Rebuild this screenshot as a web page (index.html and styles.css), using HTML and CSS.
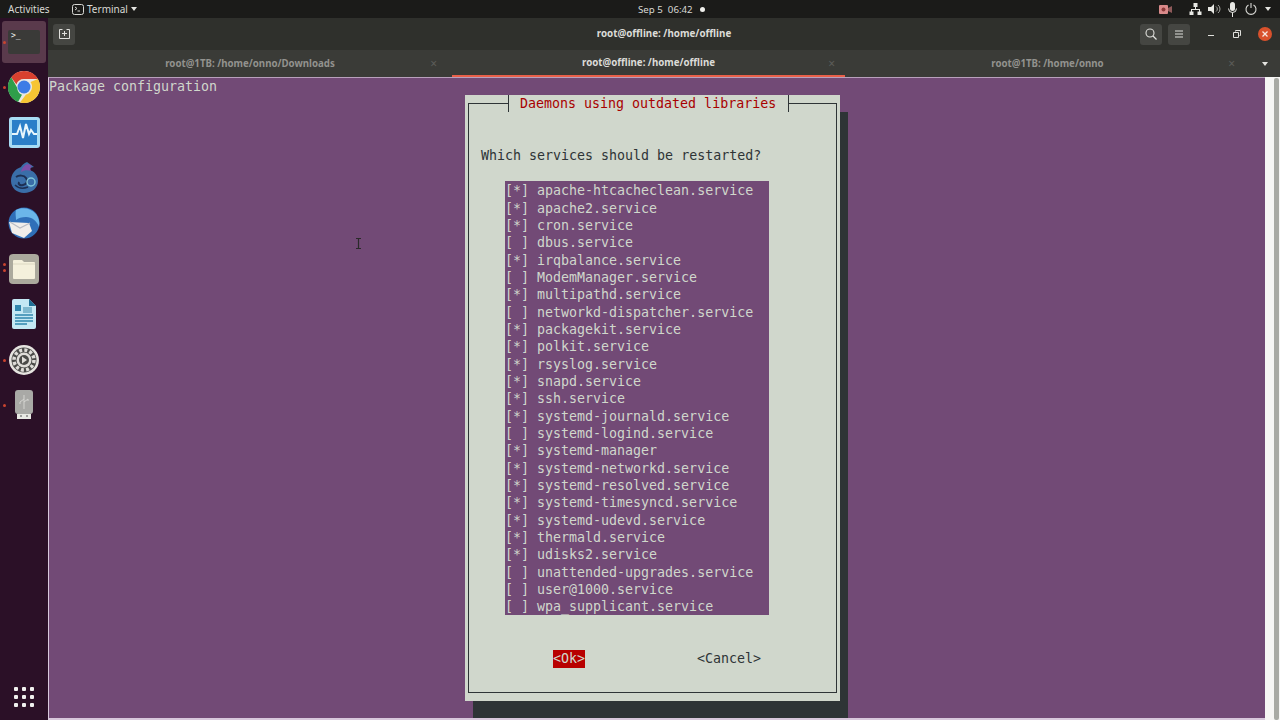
FILE: index.html
```html
<!DOCTYPE html>
<html lang="en">
<head>
<meta charset="UTF-8">
<meta name="viewport" content="width=device-width, initial-scale=1.0">
<title>Terminal</title>
<link rel="stylesheet" href="styles.css">
</head>
<body>
<div class="topbar">
    <span class="activities">Activities</span>
    <span class="app-menu">
        <svg class="app-icon" width="12" height="11" viewBox="0 0 12 11"><rect x="0.5" y="0.5" width="11" height="10" rx="2" fill="none" stroke="#d8d8d4"/><path d="M3 3l2 1.5L3 6M5.5 7H8" fill="none" stroke="#d8d8d4"/></svg>
        Terminal
        <i class="caret"></i>
    </span>
    <span class="clock">Sep 5&nbsp; 06:42 <i class="clock-dot"></i></span>
    <div class="tray">
        <svg width="13" height="11" viewBox="0 0 13 11"><rect x="0" y="1" width="9" height="9" rx="1" fill="#d98a8a"/><circle cx="4.5" cy="5.5" r="2" fill="#8c3a3a"/><path d="M9 4l4-2v7L9 7z" fill="#8f5a5a"/></svg>
        <svg class="tray-net" width="13" height="12" viewBox="0 0 13 12"><path d="M4.5 0h4v4h-1.5v2H11v2.500h1.500V12h-4V8.500H10V7H3v1.500h1.500V12h-4V8.500H2V6h4V4H4.500z" fill="#e8e8e4"/></svg>
        <svg class="tray-vol" width="13" height="12" viewBox="0 0 13 12"><path d="M0 4h3l3-3v10L3 8H0z" fill="#e8e8e4"/><path d="M8 3.500a3 3 0 0 1 0 5M10 2a5 5 0 0 1 0 8" fill="none" stroke="#a8a8a4"/></svg>
        <svg width="9" height="15" viewBox="0 0 9 15"><rect x="2" y="0" width="5" height="9" rx="2.500" fill="#e8e8e4"/><path d="M0.500 6.500a4 4 0 0 0 8 0M4.500 10.500V15" fill="none" stroke="#e8e8e4"/></svg>
        <svg width="12" height="12" viewBox="0 0 12 12"><path d="M3.500 2a5 5 0 1 0 5 0M6 0v5" fill="none" stroke="#d8d8d4" stroke-width="1.100"/></svg>
        <i class="caret"></i>
    </div>
</div>

<div class="desktop">
    <div class="dock">
        <div class="dock-item active">
            <i class="run-dot"></i>
            <div class="term-tile"><span class="term-prompt">&gt;_</span></div>
        </div>
        <div class="dock-item">
            <i class="run-dot"></i>
            <svg width="32" height="32" viewBox="0 0 32 32">
                <circle cx="16" cy="16" r="16" fill="#e8e8e4"/>
                <path d="M16 0a16 16 0 0 1 13.900 8H16a8 8 0 0 0-7.600 5.500L3.200 6.300A16 16 0 0 1 16 0z" fill="#d8412f"/>
                <path d="M3.200 6.300l6 10.400A8 8 0 0 0 14 23.800L10 31A16 16 0 0 1 3.200 6.300z" fill="#2f9e4a"/>
                <path d="M29.900 8A16 16 0 0 1 12 31.500l6-8A8 8 0 0 0 22.500 11z" fill="#f6c533"/>
                <circle cx="16" cy="16" r="6.500" fill="#3d7ce6"/>
            </svg>
        </div>
        <div class="dock-item">
            <svg width="31" height="31" viewBox="0 0 31 31">
                <rect width="31" height="31" rx="3" fill="#a8dcf4"/>
                <rect x="3" y="3" width="25" height="25" fill="#2b7fc8"/>
                <path d="M3 17h5l3-8 3 12 3-14 3 10 2-4 3 4h3" fill="none" stroke="#e8f6fc" stroke-width="2"/>
            </svg>
        </div>
        <div class="dock-item">
            <svg width="29" height="33" viewBox="0 0 29 33">
                <path d="M17 1c-3 1-5 3-6 5C5 8 1 13 1 20c0 7 6 12 13 12 8 0 14-5 14-12 0-6-4-10-9-11 1-2 3-3 5-3-2-2-5-3-7-5z" fill="#3a6ea8"/>
                <path d="M18 3c-4 1-6 4-7 8 3-2 7-2 10-1-1-2-1-4 1-5z" fill="#7f4fa8"/>
                <path d="M6 16c3-2 8-2 10 1 2 3 1 6-3 7-3 1-5-1-4-3" fill="none" stroke="#1d2f52" stroke-width="2"/>
                <circle cx="21" cy="21" r="4" fill="none" stroke="#7fc4d8" stroke-width="1.500"/>
                <path d="M5 24c3 3 8 4 13 2" fill="none" stroke="#1d2f52" stroke-width="1.500"/>
            </svg>
        </div>
        <div class="dock-item">
            <svg width="32" height="32" viewBox="0 0 32 32">
                <circle cx="16" cy="16" r="15.500" fill="#2f6fb8"/>
                <path d="M8 3c6-3 15-2 20 4 3 4 4 9 3 13-2-6-7-10-13-10-4 0-8 1-10 3 0-4-1-7 0-10z" fill="#6bb6ea"/>
                <path d="M1 15l20 1 3 8-8 7-12-5z" fill="#f0eeea"/>
                <path d="M2 15l10 6 10-5" fill="none" stroke="#b8bcc4" stroke-width="1.200"/>
            </svg>
        </div>
        <div class="dock-item">
            <i class="run-dot run-dot-up"></i>
            <i class="run-dot run-dot-down"></i>
            <svg width="30" height="30" viewBox="0 0 30 30">
                <rect width="30" height="30" rx="4" fill="#aba99d"/>
                <path d="M4 7a1 1 0 0 1 1-1h8l2 2h10a1 1 0 0 1 1 1v15a1 1 0 0 1-1 1H5a1 1 0 0 1-1-1z" fill="#f4f0dc"/>
                <path d="M4 10h22" stroke="#dcd8c2"/>
            </svg>
        </div>
        <div class="dock-item">
            <svg width="24" height="30" viewBox="0 0 24 30">
                <path d="M2 0h15l7 7v21a2 2 0 0 1-2 2H2a2 2 0 0 1-2-2V2a2 2 0 0 1 2-2z" fill="#c4e8f4"/>
                <path d="M17 0l7 7h-7z" fill="#1f6f96"/>
                <rect x="3" y="6" width="6" height="6" fill="#2f86ad"/>
                <rect x="11" y="8" width="9" height="6" fill="#7fb9cf"/>
                <path d="M3 16h18M3 19h18M3 22h18M3 25h12" stroke="#2f86ad" stroke-width="1.500"/>
            </svg>
        </div>
        <div class="dock-item">
            <i class="run-dot"></i>
            <svg width="30" height="30" viewBox="0 0 30 30">
                <circle cx="15" cy="15" r="15" fill="#e6e4e0"/>
                <circle cx="15" cy="15" r="12.500" fill="#4a4a48"/>
                <circle cx="15" cy="15" r="10" fill="none" stroke="#dedcd8" stroke-width="3.500" stroke-dasharray="3 2.240"/>
                <circle cx="15" cy="15" r="7.500" fill="#dedcd8"/>
                <circle cx="15" cy="15" r="5" fill="#4a4a48"/>
                <path d="M13 11.500l5 3.500-5 3.500z" fill="#dedcd8"/>
            </svg>
        </div>
        <div class="dock-item">
            <i class="run-dot"></i>
            <svg width="18" height="29" viewBox="0 0 18 29">
                <rect width="18" height="24" rx="3" fill="#a9a9a6"/>
                <path d="M9 5v14M9 9L5 12v2M9 12l4-3v2" fill="none" stroke="#d4d4d0"/>
                <rect x="2" y="24" width="14" height="5" fill="#e8e8e4"/>
                <path d="M5 26h2M11 26h2" stroke="#555"/>
            </svg>
        </div>
        <div class="apps-grid">
            <i></i><i></i><i></i><i></i><i></i><i></i><i></i><i></i><i></i>
        </div>
    </div>

    <div class="window">
        <div class="headerbar">
            <button class="head-btn new-tab">
                <svg width="11" height="10" viewBox="0 0 11 10"><path d="M3.500 0.500H.5v9h10v-9H7.500M5.500 2v5M3 4.500h5" fill="none" stroke="#e0e0dc"/></svg>
            </button>
            <span class="win-title">root@offline: /home/offline</span>
            <button class="head-btn">
                <svg width="12" height="12" viewBox="0 0 12 12"><circle cx="5" cy="5" r="4" fill="none" stroke="#e0e0dc" stroke-width="1.100"/><path d="M8 8l3.500 3.500" stroke="#e0e0dc" stroke-width="1.300"/></svg>
            </button>
            <button class="head-btn menu-btn">
                <svg width="8" height="8" viewBox="0 0 8 8"><path d="M0 1h8M0 4h8M0 7h8" stroke="#e0e0dc"/></svg>
            </button>
            <div class="win-controls">
                <i class="win-min"></i>
                <svg class="win-max" width="8" height="8" viewBox="0 0 8 8"><path d="M2.500 1.500V.5h5v5h-1M.5 2.500h5v5h-5z" fill="none" stroke="#e0e0dc"/></svg>
                <span class="win-close">
                    <svg width="6" height="6" viewBox="0 0 6 6"><path d="M.5 .5l5 5M5.500 .5l-5 5" stroke="#f6e6e0" stroke-width="1.300"/></svg>
                </span>
            </div>
        </div>

        <div class="tabbar">
            <div class="tab tab-first"><span>root@1TB: /home/onno/Downloads</span><b class="tab-close">×</b></div>
            <div class="tab tab-active"><span>root@offline: /home/offline</span><b class="tab-close">×</b></div>
            <div class="tab tab-last"><span>root@1TB: /home/onno</span><b class="tab-close">×</b></div>
            <i class="caret tab-caret"></i>
        </div>

        <div class="term-row">
            <div class="terminal">
                <div class="term-line">Package configuration</div>
                <svg class="ibeam" width="7" height="11" viewBox="0 0 7 11"><path d="M1 .5h5M3.500 .5v10M1 10.500h5" fill="none" stroke="#2a2a2a" stroke-width="1.200"/></svg>

                <div class="dialog">
                    <div class="frame">
                        <div class="dialog-title">Daemons using outdated libraries</div>
                        <div class="question">Which services should be restarted?</div>
                        <ul class="services">
                            <li>[*] apache-htcacheclean.service</li>
                            <li>[*] apache2.service</li>
                            <li>[*] cron.service</li>
                            <li>[ ] dbus.service</li>
                            <li>[*] irqbalance.service</li>
                            <li>[ ] ModemManager.service</li>
                            <li>[*] multipathd.service</li>
                            <li>[ ] networkd-dispatcher.service</li>
                            <li>[*] packagekit.service</li>
                            <li>[*] polkit.service</li>
                            <li>[*] rsyslog.service</li>
                            <li>[*] snapd.service</li>
                            <li>[*] ssh.service</li>
                            <li>[*] systemd-journald.service</li>
                            <li>[ ] systemd-logind.service</li>
                            <li>[*] systemd-manager</li>
                            <li>[*] systemd-networkd.service</li>
                            <li>[*] systemd-resolved.service</li>
                            <li>[*] systemd-timesyncd.service</li>
                            <li>[*] systemd-udevd.service</li>
                            <li>[*] thermald.service</li>
                            <li>[*] udisks2.service</li>
                            <li>[ ] unattended-upgrades.service</li>
                            <li>[ ] user@1000.service</li>
                            <li>[ ] wpa_supplicant.service</li>
                        </ul>
                        <div class="dialog-buttons">
                            <span class="btn-ok">&lt;Ok&gt;</span>
                            <span class="btn-cancel">&lt;Cancel&gt;</span>
                        </div>
                    </div>
                </div>
            </div>
            <div class="scrollbar"><i></i></div>
        </div>
    </div>
</div>
</body>
</html>
```

FILE: styles.css
```css
* {
    box-sizing: border-box;
}
html, body {
    height: 100%;
}
body {
    margin: 0;
    display: flex;
    flex-direction: column;
    overflow: hidden;
    font-family: "Noto Sans", Arial, sans-serif;
    background-color: #1c1c1a;
}
i {
    display: block;
}
.caret {
    width: 0;
    height: 0;
    border-left: 3.5px solid transparent;
    border-right: 3.5px solid transparent;
    border-top: 4px solid #e4e4e0;
}

/* top bar */
.topbar {
    position: relative;
    display: flex;
    align-items: center;
    flex: 0 0 18px;
    padding-left: 8px;
    font-size: 10px;
    color: #d8d8d4;
    background-color: #1b1b19;
}
.activities {
    width: 64px;
}
.app-menu {
    display: flex;
    align-items: center;
    gap: 3px;
}
.clock {
    position: absolute;
    left: 638px;
    display: flex;
    align-items: center;
    gap: 7px;
    font-size: 9.7px;
    white-space: nowrap;
}
.clock-dot {
    width: 5px;
    height: 5px;
    border-radius: 50%;
    background-color: #f0f0ec;
}
.tray {
    display: flex;
    align-items: center;
    gap: 8px;
    margin-left: auto;
    padding-right: 9px;
}
.tray-net {
    margin: 0 -2px 0 9px;
}
.tray-vol {
    margin-right: -1px;
}

/* dock */
.desktop {
    display: flex;
    flex: 1;
    min-height: 0;
}
.dock {
    display: flex;
    flex-direction: column;
    flex: 0 0 48px;
    padding-top: 3px;
    background-color: #2b1027;
}
.dock-item {
    position: relative;
    display: flex;
    align-items: center;
    justify-content: center;
    flex: 0 0 45.4px;
}
.dock-item.active {
    flex-basis: 42px;
    margin: 0 2px 1.5px;
    background-color: #5a3a4c;
    border-radius: 3px;
}
.term-tile {
    width: 32px;
    height: 24px;
    padding: 1px 3px;
    background-color: #3a3a38;
    border-radius: 2px;
}
.term-prompt {
    display: block;
    font-family: "DejaVu Sans Mono", monospace;
    font-size: 8px;
    line-height: 10px;
    color: #f0f0ec;
}
.run-dot {
    position: absolute;
    left: 3px;
    top: 50%;
    width: 3px;
    height: 3px;
    margin-top: -1px;
    border-radius: 50%;
    background-color: #c9442f;
}
.dock-item.active .run-dot {
    left: 1px;
}
.run-dot-up {
    margin-top: -6px;
}
.run-dot-down {
    margin-top: 0;
}
.apps-grid {
    display: grid;
    grid-template-columns: repeat(3, 4px);
    gap: 4px;
    justify-content: center;
    margin-top: auto;
    margin-bottom: 13px;
}
.apps-grid i {
    height: 4px;
    background-color: #f0f0ee;
    border-radius: 1px;
}

/* window */
.window {
    display: flex;
    flex-direction: column;
    flex: 1;
    min-width: 0;
}
.headerbar {
    position: relative;
    display: flex;
    align-items: center;
    flex: 0 0 32px;
    padding: 0 5px;
    background-color: #2f302c;
}
.head-btn {
    display: flex;
    align-items: center;
    justify-content: center;
    width: 22px;
    height: 21px;
    padding: 0;
    border: none;
    border-radius: 3px;
    background-color: #454642;
}
.new-tab {
    margin-right: auto;
}
.menu-btn {
    margin-left: 6px;
}
.win-title {
    position: absolute;
    left: 0;
    right: 0;
    margin-top: -1px;
    text-align: center;
    font-size: 9.8px;
    font-weight: 700;
    color: #dcdcd8;
    pointer-events: none;
}
.win-controls {
    display: flex;
    align-items: center;
    margin-left: 18px;
    padding-right: 3px;
}
.win-min {
    width: 6px;
    height: 1px;
    margin-top: 3px;
    background-color: #e0e0dc;
}
.win-max {
    margin-left: 19px;
}
.win-close {
    display: flex;
    align-items: center;
    justify-content: center;
    width: 14px;
    height: 14px;
    margin-left: 17px;
    border-radius: 50%;
    background-color: #d9512c;
}

/* tabs */
.tabbar {
    display: flex;
    flex: 0 0 27px;
    align-items: stretch;
    background-color: #3a3b37;
}
.tab {
    position: relative;
    display: flex;
    align-items: center;
    justify-content: center;
    font-size: 9.7px;
    font-weight: 700;
    color: #92928e;
}
.tab-first {
    width: 404px;
}
.tab-active {
    width: 393px;
    color: #dcdcd8;
    border-bottom: 2px solid #e9604a;
}
.tab-last {
    width: 405px;
}
.tab-close {
    position: absolute;
    right: 15px;
    top: 5px;
    font-size: 12px;
    font-weight: 400;
    color: #5c5d59;
}
.tab-active .tab-close {
    right: 10px;
}
.tab-caret {
    align-self: center;
    margin-left: 12px;
}

/* terminal */
.term-row {
    display: flex;
    flex: 1;
    min-height: 0;
}
.terminal {
    position: relative;
    flex: 1;
    overflow: hidden;
    font-family: "DejaVu Sans Mono", monospace;
    font-size: 13.3px;
    line-height: 17.33px;
    color: #d0d7cc;
    background-color: #724a76;
    border-left: 1px solid #d8c8dc;
    border-bottom: 2px solid #d8c8dc;
    border-top: 1px solid #b8a0bc;
}
.ibeam {
    position: absolute;
    left: 306px;
    top: 160px;
}
.dialog {
    position: absolute;
    left: 416px;
    top: 17px;
    width: 375px;
    height: 606px;
    padding: 8px 3px 8px;
    background-color: #d0d7cc;
    box-shadow: 8px 17px 0 #2e3436;
}
.frame {
    height: 100%;
    border: 1px solid #2e3436;
}
.dialog-title {
    width: 281px;
    height: 17px;
    margin: -9px 0 0 39px;
    padding-left: 11px;
    line-height: 17px;
    color: #a80000;
    background-color: #d0d7cc;
    border-left: 1px solid #2e3436;
    border-right: 1px solid #2e3436;
}
.question {
    margin: 35px 0 0 12px;
    color: #2e3436;
}
.services {
    width: 264px;
    height: 434px;
    margin: 17px 0 0 36px;
    padding: 1px 0 0;
    list-style-type: none;
    background-color: #724a76;
}
.services li {
    white-space: pre;
}
.dialog-buttons {
    display: flex;
    margin: 35px 0 0 84px;
    color: #2e3436;
}
.btn-ok {
    color: #d0d7cc;
    background-color: #b80000;
}
.btn-cancel {
    margin-left: 112px;
}
.scrollbar {
    flex: 0 0 15px;
    padding: 1px 1px 0 9px;
    background-color: #f6f6f4;
}
.scrollbar i {
    height: 100%;
    background-color: #a8aaa4;
    border-radius: 2px;
}
```
